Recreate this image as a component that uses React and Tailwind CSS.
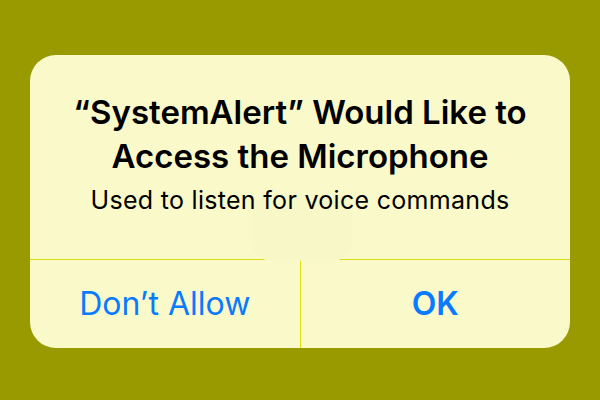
export default function App() {
  return (
    <div
      className="w-[600px] h-[400px] bg-[#999900] flex items-center justify-center"
      style={{ fontFamily: 'Inter, "Noto Sans", sans-serif' }}
    >
      <div className="w-[540px] h-[293px] mt-[2px] bg-[#f9f9c9] rounded-[26px] flex flex-col overflow-hidden">
        <div className="relative h-[204px] flex flex-col items-center pt-[35px] text-center">
          <div className="absolute left-[222px] top-[140px] w-[100px] h-[66px] rounded-[20px] bg-[#f7f7c7]" />
          <h1 className="relative text-[33px] leading-[44px] font-semibold text-black">
            “SystemAlert” Would Like to
            <br />
            Access the Microphone
          </h1>
          <p className="relative mt-[6px] text-[25px] leading-[32px] text-black tracking-[0.3px]">
            Used to listen for voice commands
          </p>
        </div>
        <div className="flex flex-1 border-t border-[#dedd10]">
          <button className="flex-1 flex items-center justify-center text-[32px] text-[#0a7aff] border-r border-[#dedd10]">
            Don’t Allow
          </button>
          <button className="flex-1 flex items-center justify-center text-[32px] font-semibold text-[#0a7aff]">
            OK
          </button>
        </div>
      </div>
    </div>
  )
}
